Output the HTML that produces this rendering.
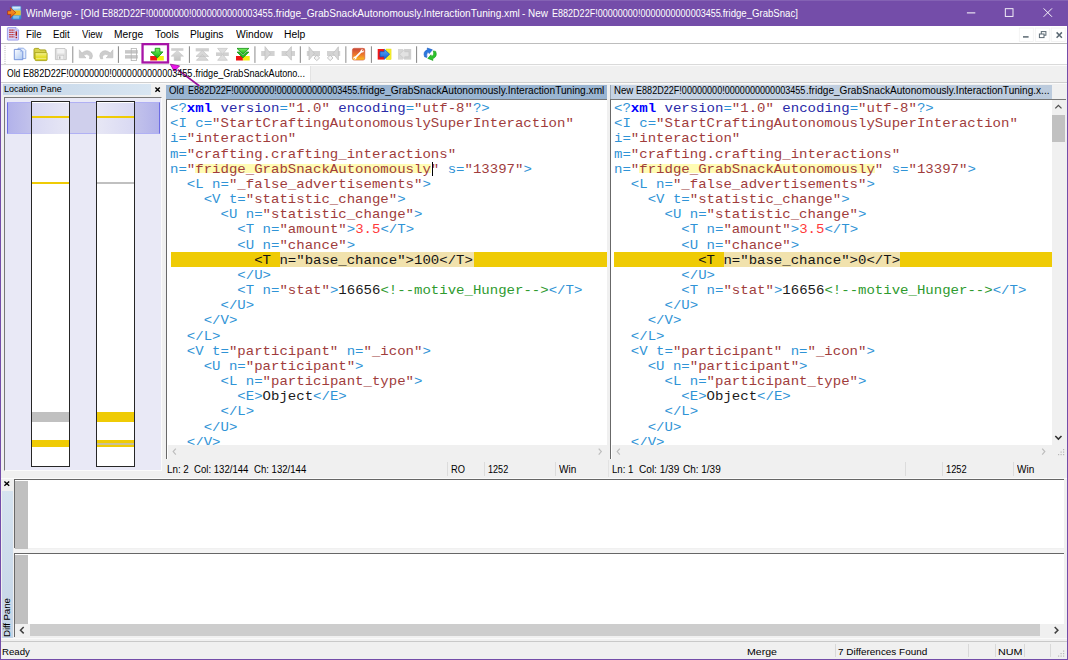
<!DOCTYPE html><html><head><meta charset="utf-8"><title>WinMerge</title><style>
*{box-sizing:border-box;margin:0;padding:0}
html,body{width:1068px;height:660px;overflow:hidden;background:#f0f0f0;font-family:"Liberation Sans", sans-serif;}
.abs,.tx,.bg,.code,.code pre,svg{position:absolute}
.tx{white-space:pre;line-height:14px;height:14px;transform-origin:0 0}
.code{overflow:hidden;background:#fff}
.code pre{font-family:"Liberation Mono", monospace;font-size:12.4px;line-height:15.17px;height:15.17px;white-space:pre;margin:0;transform:scaleX(1.1315);transform-origin:0 0}
.bg{display:block}
.o{color:#2f93d6} .s{color:#a03c3c} .k{color:#0000ff;font-weight:bold} .a{color:#2a2aa8} .t{color:#1a1a1a} .n{color:#ff3a3a} .c{color:#2e9a2e} .h{color:#141414}
</style></head><body>
<div class="abs" style="left:0px;top:0px;width:1068px;height:26px;background:#744da9;"></div>
<div class="abs" style="left:0px;top:0px;width:1068px;height:1px;background:#8462b4;"></div>
<div class="abs" style="left:1px;top:26px;width:1066px;height:17.3px;background:#fff;"></div>
<div class="abs" style="left:1px;top:43.3px;width:1066px;height:0.9px;background:#bdbdbd;"></div>
<div class="abs" style="left:1px;top:44.2px;width:1066px;height:20px;background:#fff;"></div>
<div class="abs" style="left:1px;top:64px;width:1066px;height:1px;background:#dadada;"></div>
<div class="abs" style="left:1px;top:65px;width:1066px;height:17px;background:#f0f0f0;"></div>
<div class="abs" style="left:1px;top:65px;width:309.3px;height:16.8px;background:#fff;"></div>
<div class="abs" style="left:1px;top:81.6px;width:1066px;height:1px;background:#cfcfcf;"></div>
<div class="abs" style="left:1px;top:82.6px;width:1066px;height:1px;background:#fafafa;"></div>
<div class="abs" style="left:310.3px;top:65px;width:1px;height:16.6px;background:#e3e3e3;"></div>
<div class="abs" style="left:1px;top:64.8px;width:1066px;height:0.9px;background:#fcfcfc;"></div>
<div class="abs" style="left:2.7px;top:83.8px;width:148.3px;height:10.9px;background:linear-gradient(90deg,#c4d5e7,#d9e6f2);"></div>
<div class="abs" style="left:3.9px;top:96.8px;width:158.6px;height:374.4px;background:#e9e9f6;border:1.2px solid #787878;border-right:1px solid #fbfbfb;border-bottom:1px solid #fbfbfb"></div>
<div class="abs" style="left:6.7px;top:101.9px;width:153.3px;height:32.1px;background:linear-gradient(90deg,#b2b2ea,#cfcfec 28%,#cfcfec 72%,#b2b2ea);border:1px solid #b0b0f4;border-left-color:#6c6ce4;border-right-color:#6c6ce4"></div>
<div class="abs" style="left:31.2px;top:101.2px;width:38.8px;height:365.4px;background:#fff;border:1px solid #262626"></div>
<div class="abs" style="left:32.2px;top:102.6px;width:36.8px;height:31px;background:linear-gradient(90deg,#d9d9f3,#e7e7f5);"></div>
<div class="abs" style="left:96px;top:101.2px;width:38.8px;height:365.4px;background:#fff;border:1px solid #262626"></div>
<div class="abs" style="left:97px;top:102.6px;width:36.8px;height:31px;background:linear-gradient(90deg,#e7e7f5,#d9d9f3);"></div>
<div class="abs" style="left:32.2px;top:116.2px;width:36.8px;height:1.6px;background:#efcb05;"></div>
<div class="abs" style="left:97px;top:116.2px;width:36.8px;height:1.6px;background:#efcb05;"></div>
<div class="abs" style="left:32.2px;top:182.4px;width:36.8px;height:1.3px;background:#efcb05;"></div>
<div class="abs" style="left:97px;top:182.4px;width:36.8px;height:1.2px;background:#c0c0c0;"></div>
<div class="abs" style="left:32.2px;top:411.8px;width:36.8px;height:10px;background:#c0c0c0;"></div>
<div class="abs" style="left:97px;top:411.8px;width:36.8px;height:10px;background:#efcb05;"></div>
<div class="abs" style="left:32.2px;top:439.7px;width:36.8px;height:7.6px;background:#efcb05;"></div>
<div class="abs" style="left:97px;top:439.7px;width:36.8px;height:7.6px;background:#efcb05;"></div>
<div class="abs" style="left:97px;top:443px;width:36.8px;height:2.3px;background:#c8c09a;"></div>
<div class="abs" style="left:166.4px;top:84.5px;width:440.3px;height:14.4px;background:#9ab5d2;"></div>
<div class="abs" style="left:610.4px;top:84.5px;width:441.7px;height:14.4px;background:linear-gradient(90deg,#c6d3e4,#bccbdd);border-left:1px solid #9aa7b6"></div>
<div class="abs" style="left:166.4px;top:98.8px;width:440.6px;height:360px;background:#fff;border-left:1.8px solid #686868;border-top:1.2px solid #787878"></div>
<div class="abs" style="left:610.2px;top:98.8px;width:455.6px;height:360px;background:#fff;border-left:1.8px solid #686868;border-top:1.2px solid #787878"></div>
<div class="code" style="left:168px;top:100px;width:439px;height:345px">
<pre style="top:1.61px;left:2.4px"><span class="o">&lt;?</span><span class="k">xml</span><span class="o"> </span><span class="a">version</span><span class="o">=</span><span class="s">"1.0"</span><span class="o"> </span><span class="a">encoding</span><span class="o">=</span><span class="s">"utf-8"</span><span class="o">?</span><span class="o">&gt;</span></pre>
<pre style="top:16.61px;left:2.4px"><span class="o">&lt;</span><span class="o">I</span><span class="o"> </span><span class="o">c=</span><span class="s">"StartCraftingAutonomouslySuperInteraction"</span></pre>
<pre style="top:31.61px;left:2.4px"><span class="o">i=</span><span class="s">"interaction"</span></pre>
<pre style="top:47.61px;left:2.4px"><span class="o">m=</span><span class="s">"crafting.crafting_interactions"</span></pre>
<i class="bg" style="left:27.46px;top:63.58px;width:235.76px;height:9.6px;background:#fffcb4"></i>
<pre style="top:62.61px;left:2.4px"><span class="o">n=</span><span class="s">"fridge_GrabSnackAutonomously"</span><span class="o"> </span><span class="o">s=</span><span class="s">"13397"</span><span class="o">&gt;</span></pre>
<pre style="top:77.61px;left:2.4px"><span class="t">  </span><span class="o">&lt;</span><span class="o">L</span><span class="o"> </span><span class="o">n=</span><span class="s">"_false_advertisements"</span><span class="o">&gt;</span></pre>
<pre style="top:92.61px;left:2.4px"><span class="t">    </span><span class="o">&lt;</span><span class="o">V</span><span class="o"> </span><span class="o">t=</span><span class="s">"statistic_change"</span><span class="o">&gt;</span></pre>
<pre style="top:107.61px;left:2.4px"><span class="t">      </span><span class="o">&lt;</span><span class="o">U</span><span class="o"> </span><span class="o">n=</span><span class="s">"statistic_change"</span><span class="o">&gt;</span></pre>
<pre style="top:122.61px;left:2.4px"><span class="t">        </span><span class="o">&lt;</span><span class="o">T</span><span class="o"> </span><span class="o">n=</span><span class="s">"amount"</span><span class="o">&gt;</span><span class="n">3.5</span><span class="o">&lt;</span><span class="o">/T</span><span class="o">&gt;</span></pre>
<pre style="top:138.61px;left:2.4px"><span class="t">        </span><span class="o">&lt;</span><span class="o">U</span><span class="o"> </span><span class="o">n=</span><span class="s">"chance"</span><span class="o">&gt;</span></pre>
<i class="bg" style="left:2.5px;top:152.00px;width:439px;height:14.97px;background:#efcb05"></i>
<i class="bg" style="left:111.86px;top:152.00px;width:193.66px;height:14.97px;background:#f1e2ad"></i>
<pre style="top:153.61px;left:2.4px"><span class="h">          </span><span class="h">&lt;</span><span class="h">T</span><span class="h"> </span><span class="h">n=</span><span class="h">"base_chance"</span><span class="h">&gt;</span><span class="h">100</span><span class="h">&lt;</span><span class="h">/T</span><span class="h">&gt;</span></pre>
<pre style="top:168.62px;left:2.4px"><span class="t">        </span><span class="o">&lt;</span><span class="o">/U</span><span class="o">&gt;</span></pre>
<pre style="top:183.62px;left:2.4px"><span class="t">        </span><span class="o">&lt;</span><span class="o">T</span><span class="o"> </span><span class="o">n=</span><span class="s">"stat"</span><span class="o">&gt;</span><span class="t">16656</span><span class="c">&lt;!--motive_Hunger--&gt;</span><span class="o">&lt;</span><span class="o">/T</span><span class="o">&gt;</span></pre>
<pre style="top:198.62px;left:2.4px"><span class="t">      </span><span class="o">&lt;</span><span class="o">/U</span><span class="o">&gt;</span></pre>
<pre style="top:213.62px;left:2.4px"><span class="t">    </span><span class="o">&lt;</span><span class="o">/V</span><span class="o">&gt;</span></pre>
<pre style="top:229.62px;left:2.4px"><span class="t">  </span><span class="o">&lt;</span><span class="o">/L</span><span class="o">&gt;</span></pre>
<pre style="top:244.62px;left:2.4px"><span class="t">  </span><span class="o">&lt;</span><span class="o">V</span><span class="o"> </span><span class="o">t=</span><span class="s">"participant"</span><span class="o"> </span><span class="o">n=</span><span class="s">"_icon"</span><span class="o">&gt;</span></pre>
<pre style="top:259.62px;left:2.4px"><span class="t">    </span><span class="o">&lt;</span><span class="o">U</span><span class="o"> </span><span class="o">n=</span><span class="s">"participant"</span><span class="o">&gt;</span></pre>
<pre style="top:274.62px;left:2.4px"><span class="t">      </span><span class="o">&lt;</span><span class="o">L</span><span class="o"> </span><span class="o">n=</span><span class="s">"participant_type"</span><span class="o">&gt;</span></pre>
<pre style="top:289.62px;left:2.4px"><span class="t">        </span><span class="o">&lt;</span><span class="o">E</span><span class="o">&gt;</span><span class="t">Object</span><span class="o">&lt;</span><span class="o">/E</span><span class="o">&gt;</span></pre>
<pre style="top:304.62px;left:2.4px"><span class="t">      </span><span class="o">&lt;</span><span class="o">/L</span><span class="o">&gt;</span></pre>
<pre style="top:320.62px;left:2.4px"><span class="t">    </span><span class="o">&lt;</span><span class="o">/U</span><span class="o">&gt;</span></pre>
<pre style="top:335.62px;left:2.4px"><span class="t">  </span><span class="o">&lt;</span><span class="o">/V</span><span class="o">&gt;</span></pre>
</div>
<div class="code" style="left:611.8px;top:100px;width:440.2px;height:345px">
<pre style="top:1.61px;left:2.4px"><span class="o">&lt;?</span><span class="k">xml</span><span class="o"> </span><span class="a">version</span><span class="o">=</span><span class="s">"1.0"</span><span class="o"> </span><span class="a">encoding</span><span class="o">=</span><span class="s">"utf-8"</span><span class="o">?</span><span class="o">&gt;</span></pre>
<pre style="top:16.61px;left:2.4px"><span class="o">&lt;</span><span class="o">I</span><span class="o"> </span><span class="o">c=</span><span class="s">"StartCraftingAutonomouslySuperInteraction"</span></pre>
<pre style="top:31.61px;left:2.4px"><span class="o">i=</span><span class="s">"interaction"</span></pre>
<pre style="top:47.61px;left:2.4px"><span class="o">m=</span><span class="s">"crafting.crafting_interactions"</span></pre>
<i class="bg" style="left:27.46px;top:63.58px;width:235.76px;height:9.6px;background:#fffcb4"></i>
<pre style="top:62.61px;left:2.4px"><span class="o">n=</span><span class="s">"fridge_GrabSnackAutonomously"</span><span class="o"> </span><span class="o">s=</span><span class="s">"13397"</span><span class="o">&gt;</span></pre>
<pre style="top:77.61px;left:2.4px"><span class="t">  </span><span class="o">&lt;</span><span class="o">L</span><span class="o"> </span><span class="o">n=</span><span class="s">"_false_advertisements"</span><span class="o">&gt;</span></pre>
<pre style="top:92.61px;left:2.4px"><span class="t">    </span><span class="o">&lt;</span><span class="o">V</span><span class="o"> </span><span class="o">t=</span><span class="s">"statistic_change"</span><span class="o">&gt;</span></pre>
<pre style="top:107.61px;left:2.4px"><span class="t">      </span><span class="o">&lt;</span><span class="o">U</span><span class="o"> </span><span class="o">n=</span><span class="s">"statistic_change"</span><span class="o">&gt;</span></pre>
<pre style="top:122.61px;left:2.4px"><span class="t">        </span><span class="o">&lt;</span><span class="o">T</span><span class="o"> </span><span class="o">n=</span><span class="s">"amount"</span><span class="o">&gt;</span><span class="n">3.5</span><span class="o">&lt;</span><span class="o">/T</span><span class="o">&gt;</span></pre>
<pre style="top:138.61px;left:2.4px"><span class="t">        </span><span class="o">&lt;</span><span class="o">U</span><span class="o"> </span><span class="o">n=</span><span class="s">"chance"</span><span class="o">&gt;</span></pre>
<i class="bg" style="left:2.5px;top:152.00px;width:440.2px;height:14.97px;background:#efcb05"></i>
<i class="bg" style="left:111.86px;top:152.00px;width:176.82px;height:14.97px;background:#f1e2ad"></i>
<pre style="top:153.61px;left:2.4px"><span class="h">          </span><span class="h">&lt;</span><span class="h">T</span><span class="h"> </span><span class="h">n=</span><span class="h">"base_chance"</span><span class="h">&gt;</span><span class="h">0</span><span class="h">&lt;</span><span class="h">/T</span><span class="h">&gt;</span></pre>
<pre style="top:168.62px;left:2.4px"><span class="t">        </span><span class="o">&lt;</span><span class="o">/U</span><span class="o">&gt;</span></pre>
<pre style="top:183.62px;left:2.4px"><span class="t">        </span><span class="o">&lt;</span><span class="o">T</span><span class="o"> </span><span class="o">n=</span><span class="s">"stat"</span><span class="o">&gt;</span><span class="t">16656</span><span class="c">&lt;!--motive_Hunger--&gt;</span><span class="o">&lt;</span><span class="o">/T</span><span class="o">&gt;</span></pre>
<pre style="top:198.62px;left:2.4px"><span class="t">      </span><span class="o">&lt;</span><span class="o">/U</span><span class="o">&gt;</span></pre>
<pre style="top:213.62px;left:2.4px"><span class="t">    </span><span class="o">&lt;</span><span class="o">/V</span><span class="o">&gt;</span></pre>
<pre style="top:229.62px;left:2.4px"><span class="t">  </span><span class="o">&lt;</span><span class="o">/L</span><span class="o">&gt;</span></pre>
<pre style="top:244.62px;left:2.4px"><span class="t">  </span><span class="o">&lt;</span><span class="o">V</span><span class="o"> </span><span class="o">t=</span><span class="s">"participant"</span><span class="o"> </span><span class="o">n=</span><span class="s">"_icon"</span><span class="o">&gt;</span></pre>
<pre style="top:259.62px;left:2.4px"><span class="t">    </span><span class="o">&lt;</span><span class="o">U</span><span class="o"> </span><span class="o">n=</span><span class="s">"participant"</span><span class="o">&gt;</span></pre>
<pre style="top:274.62px;left:2.4px"><span class="t">      </span><span class="o">&lt;</span><span class="o">L</span><span class="o"> </span><span class="o">n=</span><span class="s">"participant_type"</span><span class="o">&gt;</span></pre>
<pre style="top:289.62px;left:2.4px"><span class="t">        </span><span class="o">&lt;</span><span class="o">E</span><span class="o">&gt;</span><span class="t">Object</span><span class="o">&lt;</span><span class="o">/E</span><span class="o">&gt;</span></pre>
<pre style="top:304.62px;left:2.4px"><span class="t">      </span><span class="o">&lt;</span><span class="o">/L</span><span class="o">&gt;</span></pre>
<pre style="top:320.62px;left:2.4px"><span class="t">    </span><span class="o">&lt;</span><span class="o">/U</span><span class="o">&gt;</span></pre>
<pre style="top:335.62px;left:2.4px"><span class="t">  </span><span class="o">&lt;</span><span class="o">/V</span><span class="o">&gt;</span></pre>
</div>
<div class="abs" style="left:431.9px;top:161.6px;width:1.5px;height:14px;background:#000;"></div>
<div class="abs" style="left:168px;top:445px;width:439px;height:13.8px;background:#f0f0f0;"></div>
<div class="abs" style="left:611.8px;top:445px;width:454.5px;height:13.8px;background:#f0f0f0;"></div>
<div class="abs" style="left:1052px;top:99.7px;width:14.3px;height:345.3px;background:#f0f0f0;"></div>
<div class="abs" style="left:1052px;top:114.7px;width:12.8px;height:27.5px;background:#c1c1c1;"></div>
<div class="abs" style="left:165px;top:459px;width:902px;height:19px;background:#f0f0f0;"></div>
<div class="abs" style="left:447.4px;top:462px;width:1px;height:14px;background:#dcdcdc;"></div>
<div class="abs" style="left:484.3px;top:462px;width:1px;height:14px;background:#dcdcdc;"></div>
<div class="abs" style="left:555px;top:462px;width:1px;height:14px;background:#dcdcdc;"></div>
<div class="abs" style="left:904.5px;top:462px;width:1px;height:14px;background:#dcdcdc;"></div>
<div class="abs" style="left:941.6px;top:462px;width:1px;height:14px;background:#dcdcdc;"></div>
<div class="abs" style="left:1012.6px;top:462px;width:1px;height:14px;background:#dcdcdc;"></div>
<div class="abs" style="left:608px;top:460px;width:1px;height:17px;background:#e2e2e2;"></div>
<div class="abs" style="left:1px;top:477.6px;width:1066px;height:1px;background:#fbfbfb;"></div>
<div class="abs" style="left:13.9px;top:478.8px;width:1050px;height:69.7px;background:#fff;border-top:1.8px solid #666;border-left:1.4px solid #696969"></div>
<div class="abs" style="left:15.3px;top:480.5px;width:13.2px;height:68px;background:#c0c0c0;"></div>
<div class="abs" style="left:13.9px;top:548.5px;width:1050px;height:5px;background:#f4f4f4;"></div>
<div class="abs" style="left:13.9px;top:553.2px;width:1050px;height:70.8px;background:#fff;border-top:1.8px solid #666;border-left:1.4px solid #696969"></div>
<div class="abs" style="left:15.3px;top:554.9px;width:13.2px;height:69.1px;background:#c0c0c0;"></div>
<div class="abs" style="left:15.3px;top:624px;width:1049px;height:12.4px;background:#f0f0f0;"></div>
<div class="abs" style="left:13.9px;top:624px;width:1.4px;height:12.6px;background:#696969;"></div>
<div class="abs" style="left:30px;top:624.3px;width:1010px;height:11.8px;background:#cdcdcd;"></div>
<div class="abs" style="left:2px;top:490.7px;width:10.5px;height:148px;background:linear-gradient(180deg,#d6e3f0,#c4d4e6);"></div>
<div class="abs" style="left:1px;top:638.2px;width:1066px;height:1px;background:#fafafa;"></div>
<div class="abs" style="left:1px;top:640.6px;width:1066px;height:1px;background:#c9c9c9;"></div>
<div class="abs" style="left:1px;top:641.6px;width:1066px;height:17.4px;background:#f0f0f0;"></div>
<div class="abs" style="left:834.7px;top:644px;width:1px;height:13px;background:#d9d9d9;"></div>
<div class="abs" style="left:968.4px;top:644px;width:1px;height:13px;background:#d9d9d9;"></div>
<div class="abs" style="left:994.9px;top:644px;width:1px;height:13px;background:#d9d9d9;"></div>
<div class="abs" style="left:1024.2px;top:644px;width:1px;height:13px;background:#d9d9d9;"></div>
<div class="abs" style="left:1050px;top:644px;width:1px;height:13px;background:#d9d9d9;"></div>
<svg style="left:0;top:0" width="1068" height="100" viewBox="0 0 1068 100"><defs><linearGradient id="gDoc" x1="0" y1="0" x2="1" y2="1"><stop offset="0" stop-color="#ffffff"/><stop offset="1" stop-color="#a9c6f1"/></linearGradient><linearGradient id="gFol" x1="0" y1="0" x2="0" y2="1"><stop offset="0" stop-color="#f4f29a"/><stop offset="0.5" stop-color="#e6e032"/><stop offset="1" stop-color="#d8d020"/></linearGradient><linearGradient id="gGrn" x1="0" y1="0" x2="0" y2="1"><stop offset="0" stop-color="#7cf060"/><stop offset="1" stop-color="#10b010"/></linearGradient><linearGradient id="gGry" x1="0" y1="0" x2="0" y2="1"><stop offset="0" stop-color="#dcdcdc"/><stop offset="1" stop-color="#c2c2c2"/></linearGradient><linearGradient id="gWr" x1="0" y1="0" x2="0" y2="1"><stop offset="0" stop-color="#c8453a"/><stop offset="0.55" stop-color="#ee7a2a"/><stop offset="1" stop-color="#fbc21e"/></linearGradient><linearGradient id="gApp" x1="0" y1="0" x2="0" y2="1"><stop offset="0" stop-color="#f4faff"/><stop offset="0.3" stop-color="#7ec0f0"/><stop offset="1" stop-color="#1f86d8"/></linearGradient><linearGradient id="gArr" x1="0" y1="0" x2="0" y2="1"><stop offset="0" stop-color="#f8a030"/><stop offset="1" stop-color="#e86808"/></linearGradient><linearGradient id="gBlu" x1="0" y1="0" x2="0" y2="1"><stop offset="0" stop-color="#58a8f8"/><stop offset="1" stop-color="#1060d8"/></linearGradient></defs><rect x="11.9" y="6.2" width="9" height="13" rx="0.8" fill="url(#gApp)" stroke="#3a8cd0" stroke-width="0.6"/><rect x="12.3" y="10.4" width="8.3" height="4.9" fill="#f6d22c"/><path d="M14.5 11.7h5.6M14.5 13h5.6M14.5 14.3h5.6" stroke="#f0a018" stroke-width="0.7"/><path d="M13.2 8h4.5M13.2 16.8h6M13.2 18h6" stroke="#e8f4ff" stroke-width="0.6"/><path d="M7.6 10.9 L10.9 10.9 L10.2 7.6 L15.8 12.7 L10.2 17.9 L10.9 14.6 L7.6 14.6 Z" fill="url(#gArr)" stroke="#a82c10" stroke-width="0.7" stroke-linejoin="round"/><path d="M8 27.6 H16 L18.6 30.2 V39.4 Q18.6 40.1 17.9 40.1 H8 Q7.4 40.1 7.4 39.4 V28.2 Q7.4 27.6 8 27.6 Z" fill="#d4d4fc" stroke="#8c8ce6" stroke-width="0.8"/><path d="M16 27.6 V30.2 H18.6" fill="#eeeeff" stroke="#8c8ce6" stroke-width="0.6"/><path d="M9.2 30.2h5.2M9.2 32.4h5.2M9.2 34.6h5.2M9.2 36.8h5.2" stroke="#c03030" stroke-width="1.3" stroke-dasharray="1.6 0.5"/><path d="M16.3 31.4v4.4" stroke="#a81818" stroke-width="1.5"/><rect x="15.6" y="36.8" width="1.5" height="1.4" fill="#a81818"/><path d="M966.9 12.9H975.3" stroke="#fff" stroke-width="1"/><rect x="1005.3" y="8.7" width="7.7" height="7.7" fill="none" stroke="#fff" stroke-width="0.9"/><path d="M1043.6 8.4L1052 16.8M1052 8.4L1043.6 16.8" stroke="#fff" stroke-width="0.95"/><path d="M1023 36.9H1028.6" stroke="#5a6872" stroke-width="1.5"/><rect x="1041.3" y="31.6" width="4.6" height="3.6" fill="none" stroke="#5a6872" stroke-width="1"/><rect x="1039.4" y="34" width="4.6" height="3.6" fill="#fff" stroke="#5a6872" stroke-width="1"/><path d="M1056.6 32.4L1061.9 37.7M1061.9 32.4L1056.6 37.7" stroke="#5a6872" stroke-width="1.5"/><rect x="1019.3" y="28" width="14" height="13.5" fill="none" stroke="#f1f1f1" stroke-width="0.8"/><rect x="1035.3" y="28" width="14" height="13.5" fill="none" stroke="#f1f1f1" stroke-width="0.8"/><rect x="1051.2" y="28" width="14" height="13.5" fill="none" stroke="#f1f1f1" stroke-width="0.8"/><rect x="4.5" y="45.80" width="1" height="1" fill="#b4b4b4"/><rect x="4.5" y="47.95" width="1" height="1" fill="#b4b4b4"/><rect x="4.5" y="50.10" width="1" height="1" fill="#b4b4b4"/><rect x="4.5" y="52.25" width="1" height="1" fill="#b4b4b4"/><rect x="4.5" y="54.40" width="1" height="1" fill="#b4b4b4"/><rect x="4.5" y="56.55" width="1" height="1" fill="#b4b4b4"/><rect x="4.5" y="58.70" width="1" height="1" fill="#b4b4b4"/><rect x="4.5" y="60.85" width="1" height="1" fill="#b4b4b4"/><rect x="4.5" y="63.00" width="1" height="1" fill="#b4b4b4"/><rect x="72.0" y="46.3" width="1.4" height="16.6" fill="#adadad"/><rect x="117.9" y="46.3" width="1" height="16.6" fill="#858585"/><rect x="188.9" y="46.3" width="1" height="16.6" fill="#858585"/><rect x="254.20000000000002" y="46.3" width="1.4" height="16.6" fill="#adadad"/><rect x="299.8" y="46.3" width="1" height="16.6" fill="#858585"/><rect x="345.1" y="46.3" width="1.4" height="16.6" fill="#adadad"/><rect x="370.9" y="46.3" width="1" height="16.6" fill="#858585"/><rect x="416.1" y="46.3" width="1" height="16.6" fill="#858585"/><path d="M18 48.2 H23.6 L25.8 50.4 V58.6 H18 Z" fill="#e4eefc" stroke="#7c9ce0" stroke-width="0.8" stroke-linejoin="round"/><path d="M14.3 49.4 H20.6 L22.8 51.6 V59.7 H14.3 Z" fill="url(#gDoc)" stroke="#6c8cd8" stroke-width="0.9" stroke-linejoin="round"/><path d="M20.6 49.4V51.6H22.8" fill="none" stroke="#8caae6" stroke-width="0.6"/><path d="M34 49.6 Q34 48.4 35.2 48.4 H38.6 L40 49.9 H45 Q46 49.9 46 51 V58.5 H34 Z" fill="#d8d24a" stroke="#a09c10" stroke-width="0.9" stroke-linejoin="round"/><path d="M35 52.6 H46.4 Q47.1 52.6 47.1 53.4 V59.6 Q47.1 60.6 46.1 60.6 H36 Q35 60.6 35 59.6 Z" fill="url(#gFol)" stroke="#a8a418" stroke-width="0.9" stroke-linejoin="round"/><path d="M36 58.6H46.2" stroke="#f4f2a0" stroke-width="0.7"/><path d="M55.4 48.5 H65 L66.3 49.8 V59.6 H55.4 Z" fill="#dedede" stroke="#c2c2c2" stroke-width="0.9"/><rect x="57.2" y="48.9" width="7.2" height="4.6" fill="#f3f3f3"/><rect x="57.8" y="55.6" width="6" height="4" fill="#efefef" stroke="#c6c6c6" stroke-width="0.5"/><rect x="59" y="56.4" width="1.5" height="2.4" fill="#b8b8b8"/><path d="M79.3 49.8 L79.3 57.8 L86 57.8 L83.6 55.6 Q86.3 53 89 55.3 Q90.4 56.8 89.4 58.7 L91.6 58.7 Q93.4 55.8 91.6 52.9 Q87.3 48.3 81.9 53.1 Z" fill="#cdcdcd" stroke="#bcbcbc" stroke-width="0.6" stroke-linejoin="round"/><g transform="translate(192.2 0) scale(-1 1)"><path d="M79.3 49.8 L79.3 57.8 L86 57.8 L83.6 55.6 Q86.3 53 89 55.3 Q90.4 56.8 89.4 58.7 L91.6 58.7 Q93.4 55.8 91.6 52.9 Q87.3 48.3 81.9 53.1 Z" fill="#cdcdcd" stroke="#bcbcbc" stroke-width="0.6" stroke-linejoin="round"/></g><rect x="125" y="50" width="12.8" height="3.7" fill="#d0d0d0"/><rect x="125" y="55" width="12.8" height="3.7" fill="#d0d0d0"/><path d="M125 51.2h12.8M125 52.5h12.8M125 56.2h12.8M125 57.5h12.8" stroke="#bcbcbc" stroke-width="0.5"/><rect x="131.2" y="48.4" width="5.2" height="12.2" fill="none" stroke="#b4b4b4" stroke-width="0.8"/><rect x="150.2" y="56" width="6.8" height="4.5" fill="#ee1414"/><rect x="157" y="56" width="6.8" height="4.5" fill="#f4ee10"/><path d="M155.2 48.3 H159.9 V51.9 H162.9 L157.4 57.9 L151 51.9 H155.2 Z" fill="url(#gGrn)" stroke="#0a8c0a" stroke-width="0.8" stroke-linejoin="round"/><rect x="171.2" y="48.2" width="12.2" height="2.6" fill="#cfcfcf"/><path d="M177.3 50.6 L183.5 56.2 H180.4 V60.5 H174.2 V56.2 H171.1 Z" fill="url(#gGry)" stroke="#c0c0c0" stroke-width="0.5"/><rect x="195.7" y="48.2" width="13.2" height="3.2" fill="#d0d0d0"/><path d="M202.3 50.4 L208.6 56.4 H196 Z M202.3 54.4 L208.2 60.3 H196.4 Z" fill="#d8d8d8" stroke="#c2c2c2" stroke-width="0.7" stroke-linejoin="round"/><rect x="216" y="52.4" width="12.8" height="3.6" fill="#d0d0d0"/><path d="M217.6 48.4 H227.4 L222.5 54.3 Z M222.5 54.3 L227.4 60.3 H217.6 Z" fill="#dedede" stroke="#c4c4c4" stroke-width="0.7" stroke-linejoin="round"/><rect x="236" y="56" width="6.9" height="4.5" fill="#ee1414"/><rect x="242.9" y="56" width="6.8" height="4.5" fill="#f4ee10"/><path d="M237 48.4 H248.9 L243 54.2 Z" fill="url(#gGrn)" stroke="#0a8c0a" stroke-width="0.8" stroke-linejoin="round"/><path d="M237 52 L243 57.9 L248.9 52 L246.6 52 L243 55.4 L239.4 52 Z" fill="#22c022" stroke="#0a8c0a" stroke-width="0.7" stroke-linejoin="round"/><rect x="261.2" y="51" width="13.4" height="5" fill="#d2d2d2"/><path d="M265 46.6 L270.6 53.5 L265 60.2 Z" fill="#d6d6d6" stroke="#bebebe" stroke-width="0.7" stroke-linejoin="round"/><rect x="281.6" y="51" width="13.4" height="5" fill="#d2d2d2"/><path d="M291.4 46.6 L285.6 53.5 L291.4 60.2 Z" fill="#d6d6d6" stroke="#bebebe" stroke-width="0.7" stroke-linejoin="round"/><rect x="306.8" y="51" width="13.2" height="5" fill="#d2d2d2"/><path d="M309 46.8 L314.4 53.5 L309 60 Z" fill="#d6d6d6" stroke="#bebebe" stroke-width="0.7" stroke-linejoin="round"/><path d="M316.8 55.2 L319.6 57.9 L316.8 60.6 L314 57.9 Z" fill="#f4f4f4" stroke="#bcbcbc" stroke-width="0.9"/><rect x="327" y="51" width="13.2" height="5" fill="#d2d2d2"/><path d="M338.4 46.8 L333 53.5 L338.4 60 Z" fill="#d6d6d6" stroke="#bebebe" stroke-width="0.7" stroke-linejoin="round"/><path d="M330.2 55.2 L333 57.9 L330.2 60.6 L327.4 57.9 Z" fill="#f4f4f4" stroke="#bcbcbc" stroke-width="0.9"/><rect x="352.4" y="48.3" width="12.4" height="11.8" rx="1.8" fill="url(#gWr)" stroke="#d05a3a" stroke-width="0.6"/><path d="M355 57.9 L361.8 51.2" stroke="#fff" stroke-width="1.7" stroke-linecap="round"/><circle cx="362.2" cy="50.9" r="1.7" fill="#fff"/><path d="M362.3 50.8 L364.4 48.7" stroke="#e2603a" stroke-width="1.1"/><circle cx="354.9" cy="58" r="1.6" fill="#fff"/><path d="M354.7 58.2 L353.2 59.7" stroke="#f6a824" stroke-width="1"/><rect x="377.7" y="49" width="6.6" height="10.6" fill="#f01818"/><rect x="386" y="49" width="5.1" height="10.6" fill="#f6ee2a" stroke="#e0d818" stroke-width="0.4"/><rect x="379" y="50.2" width="3" height="8.2" fill="#f8b0b0" opacity=".0"/><path d="M380 51.7 H384.4 V49.3 L389.6 54.2 L384.4 59.2 V56.8 H380 Z" fill="url(#gBlu)" stroke="#0a50c0" stroke-width="0.7" stroke-linejoin="round"/><rect x="398" y="49" width="5.1" height="10.6" fill="#d6d6d6"/><rect x="404.7" y="49" width="6.5" height="10.6" fill="#d0d0d0"/><path d="M409 51.7 H404.6 V49.3 L399.4 54.2 L404.6 59.2 V56.8 H409 Z" fill="#e2e2e2" stroke="#c4c4c4" stroke-width="0.7" stroke-linejoin="round"/><path d="M424.6 56.8 Q422.6 51.6 427.6 49.6 L427.2 48 L432.4 49.8 L429.2 53.6 L428.6 52 Q425.8 53.2 426.9 57.4 Z" fill="#2a78e0" stroke="#1458c0" stroke-width="0.6" stroke-linejoin="round"/><path d="M435.7 51.4 Q437.8 56.6 432.6 58.8 L433 60.4 L427.8 58.4 L431 54.8 L431.6 56.4 Q434.6 55 433.3 50.9 Z" fill="#2cc42c" stroke="#109a10" stroke-width="0.6" stroke-linejoin="round"/><rect x="142.55" y="44.15" width="25.5" height="18.3" fill="none" stroke="#a714a7" stroke-width="2.3"/><path d="M177.6 69.6 L199.4 86" stroke="#9a129a" stroke-width="1.7"/><path d="M170.3 64.2 L179.6 65.9 L174.3 71.3 Z" fill="#ee14ee" stroke="#a012a0" stroke-width="0.9" stroke-linejoin="round"/><path d="M155.4 87.4L159.8 91.8M159.8 87.4L155.4 91.8" stroke="#000" stroke-width="1.4"/></svg><svg style="left:0;top:100px" width="1068" height="560" viewBox="0 100 1068 560"><path d="M175.8 448.6 L173.2 451.6 L175.8 454.6" fill="none" stroke="#bdbdbd" stroke-width="1.2"/><path d="M598.7 448.6 L601.3 451.6 L598.7 454.6" fill="none" stroke="#bdbdbd" stroke-width="1.2"/><path d="M619.8 448.6 L617.2 451.6 L619.8 454.6" fill="none" stroke="#bdbdbd" stroke-width="1.2"/><path d="M1042.2 448.6 L1044.8 451.6 L1042.2 454.6" fill="none" stroke="#bdbdbd" stroke-width="1.2"/><path d="M1055.3 108.4 L1058.4 105.3 L1061.5 108.4" fill="none" stroke="#505050" stroke-width="1.3"/><path d="M1055.3 436 L1058.4 439.1 L1061.5 436" fill="none" stroke="#303030" stroke-width="1.5"/><rect x="1063" y="449" width="1.2" height="1.2" fill="#b8b8b8"/><rect x="1063" y="451.5" width="1.2" height="1.2" fill="#b8b8b8"/><rect x="1063" y="454" width="1.2" height="1.2" fill="#b8b8b8"/><rect x="1060.5" y="451.5" width="1.2" height="1.2" fill="#b8b8b8"/><rect x="1060.5" y="454" width="1.2" height="1.2" fill="#b8b8b8"/><rect x="1058" y="454" width="1.2" height="1.2" fill="#b8b8b8"/><path d="M23.7 627.0 L20.5 630.2 L23.7 633.4" fill="none" stroke="#404040" stroke-width="1.5"/><path d="M1054.7 627.0 L1057.9 630.2 L1054.7 633.4" fill="none" stroke="#404040" stroke-width="1.5"/><path d="M4.4 481.4L9.2 485.7M9.2 481.4L4.4 485.7" stroke="#000" stroke-width="1.4"/><rect x="1063" y="650.5" width="1.2" height="1.2" fill="#b8b8b8"/><rect x="1063" y="653" width="1.2" height="1.2" fill="#b8b8b8"/><rect x="1063" y="655.5" width="1.2" height="1.2" fill="#b8b8b8"/><rect x="1060.5" y="653" width="1.2" height="1.2" fill="#b8b8b8"/><rect x="1060.5" y="655.5" width="1.2" height="1.2" fill="#b8b8b8"/><rect x="1058" y="655.5" width="1.2" height="1.2" fill="#b8b8b8"/></svg>
<div class="abs" style="left:0px;top:26px;width:1px;height:634px;background:#744da9;"></div>
<div class="abs" style="left:1066.6px;top:26px;width:1.4px;height:634px;background:#744da9;"></div>
<div class="abs" style="left:0px;top:659px;width:1068px;height:1px;background:#744da9;"></div>
<span class="tx" id="ti1" style="left:25.70px;top:6.89px;font-size:10.0px;color:#fff;transform:scaleX(1.0062);">WinMerge - [Old</span>
<span class="tx" id="ti2" style="left:101.81px;top:6.89px;font-size:10.0px;color:#fff;transform:scaleX(0.9141);">E882D22F!00000000!0000000000003455</span>
<span class="tx" id="ti3" style="left:272.59px;top:6.89px;font-size:10.0px;color:#fff;transform:scaleX(1.0115);">.fridge_GrabSnackAutonomously.InteractionTuning.xml</span>
<span class="tx" id="ti4" style="left:522.10px;top:6.89px;font-size:10.0px;color:#fff;transform:scaleX(0.9922);">- New</span>
<span class="tx" id="ti5" style="left:551.52px;top:6.89px;font-size:10.0px;color:#fff;transform:scaleX(0.9034);">E882D22F!00000000!0000000000003455</span>
<span class="tx" id="ti6" style="left:720.24px;top:6.89px;font-size:10.0px;color:#fff;transform:scaleX(0.9597);">.fridge_GrabSnac]</span>
<span class="tx" id="m1" style="left:25.88px;top:27.90px;font-size:10.0px;color:#000;transform:scaleX(0.9667);">File</span>
<span class="tx" id="m2" style="left:52.97px;top:27.90px;font-size:10.0px;color:#000;transform:scaleX(0.9697);">Edit</span>
<span class="tx" id="m3" style="left:81.70px;top:27.90px;font-size:10.0px;color:#000;transform:scaleX(0.9488);">View</span>
<span class="tx" id="m4" style="left:114.23px;top:27.90px;font-size:10.0px;color:#000;transform:scaleX(1.0275);">Merge</span>
<span class="tx" id="m5" style="left:155.14px;top:27.90px;font-size:10.0px;color:#000;transform:scaleX(1.0286);">Tools</span>
<span class="tx" id="m6" style="left:190.13px;top:27.90px;font-size:10.0px;color:#000;transform:scaleX(1.0205);">Plugins</span>
<span class="tx" id="m7" style="left:235.50px;top:27.90px;font-size:10.0px;color:#000;transform:scaleX(1.0282);">Window</span>
<span class="tx" id="m8" style="left:283.82px;top:27.90px;font-size:10.0px;color:#000;transform:scaleX(1.0359);">Help</span>
<span class="tx" id="tab1" style="left:6.88px;top:66.80px;font-size:10.3px;color:#000;transform:scaleX(0.8333);">Old</span>
<span class="tx" id="tab2" style="left:23.14px;top:66.80px;font-size:10.3px;color:#000;transform:scaleX(0.8805);">E882D22F!00000000!0000000000003455</span>
<span class="tx" id="tab3" style="left:192.72px;top:66.80px;font-size:10.3px;color:#000;transform:scaleX(0.8806);">.fridge_GrabSnackAutono...</span>
<span class="tx" id="loc" style="left:4.46px;top:82.46px;font-size:9.2px;color:#000;transform:scaleX(0.9818);">Location Pane</span>
<span class="tx" id="hl1" style="left:169.32px;top:84.19px;font-size:10.0px;color:#000;transform:scaleX(0.9655);">Old</span>
<span class="tx" id="hl2" style="left:187.52px;top:84.19px;font-size:10.0px;color:#000;transform:scaleX(0.9066);">E882D22F!00000000!0000000000003455</span>
<span class="tx" id="hl3" style="left:357.19px;top:84.19px;font-size:10.0px;color:#000;transform:scaleX(1.0136);">.fridge_GrabSnackAutonomously.InteractionTuning.xml</span>
<span class="tx" id="hr1" style="left:613.88px;top:84.19px;font-size:10.0px;color:#000;transform:scaleX(0.9662);">New</span>
<span class="tx" id="hr2" style="left:636.22px;top:84.19px;font-size:10.0px;color:#000;transform:scaleX(0.9066);">E882D22F!00000000!0000000000003455</span>
<span class="tx" id="hr3" style="left:805.69px;top:84.19px;font-size:10.0px;color:#000;transform:scaleX(1.0071);">.fridge_GrabSnackAutonomously.InteractionTuning.x...</span>
<span class="tx" id="sl1" style="left:167.16px;top:462.50px;font-size:10.0px;color:#000;transform:scaleX(0.9810);">Ln: 2</span>
<span class="tx" id="sl1b" style="left:193.82px;top:462.50px;font-size:10.0px;color:#000;transform:scaleX(0.9589);">Col: 132/144</span>
<span class="tx" id="sl1c" style="left:253.72px;top:462.50px;font-size:10.0px;color:#000;transform:scaleX(0.9581);">Ch: 132/144</span>
<span class="tx" id="sl2" style="left:450.80px;top:462.50px;font-size:10.0px;color:#000;transform:scaleX(0.9309);">RO</span>
<span class="tx" id="sl3" style="left:487.92px;top:462.50px;font-size:10.0px;color:#000;transform:scaleX(0.9095);">1252</span>
<span class="tx" id="sl4" style="left:559.20px;top:462.50px;font-size:10.0px;color:#000;transform:scaleX(1.0030);">Win</span>
<span class="tx" id="sr1" style="left:612.38px;top:462.50px;font-size:10.0px;color:#000;transform:scaleX(0.9619);">Ln: 1</span>
<span class="tx" id="sr1b" style="left:638.50px;top:462.50px;font-size:10.0px;color:#000;transform:scaleX(1.0077);">Col: 1/39</span>
<span class="tx" id="sr1c" style="left:683.40px;top:462.50px;font-size:10.0px;color:#000;transform:scaleX(0.9973);">Ch: 1/39</span>
<span class="tx" id="sr3" style="left:945.60px;top:462.50px;font-size:10.0px;color:#000;transform:scaleX(0.9286);">1252</span>
<span class="tx" id="sr4" style="left:1016.90px;top:462.50px;font-size:10.0px;color:#000;transform:scaleX(1.0030);">Win</span>
<span class="tx" id="b1" style="left:1.83px;top:645.09px;font-size:9.4px;color:#000;transform:scaleX(1.0286);">Ready</span>
<span class="tx" id="b2" style="left:746.86px;top:645.09px;font-size:9.4px;color:#000;transform:scaleX(1.1255);">Merge</span>
<span class="tx" id="b3" style="left:838.27px;top:645.09px;font-size:9.4px;color:#000;transform:scaleX(1.0595);">7 Differences Found</span>
<span class="tx" id="b4" style="left:997.84px;top:645.09px;font-size:9.4px;color:#000;transform:scaleX(1.1450);">NUM</span>
<span class="tx" style="left:1.3px;top:637.2px;height:12px;line-height:12px;font-size:9.8px;transform:rotate(-90deg);transform-origin:0 0;letter-spacing:-0.15px;color:#000">Diff Pane</span>
</body></html>
